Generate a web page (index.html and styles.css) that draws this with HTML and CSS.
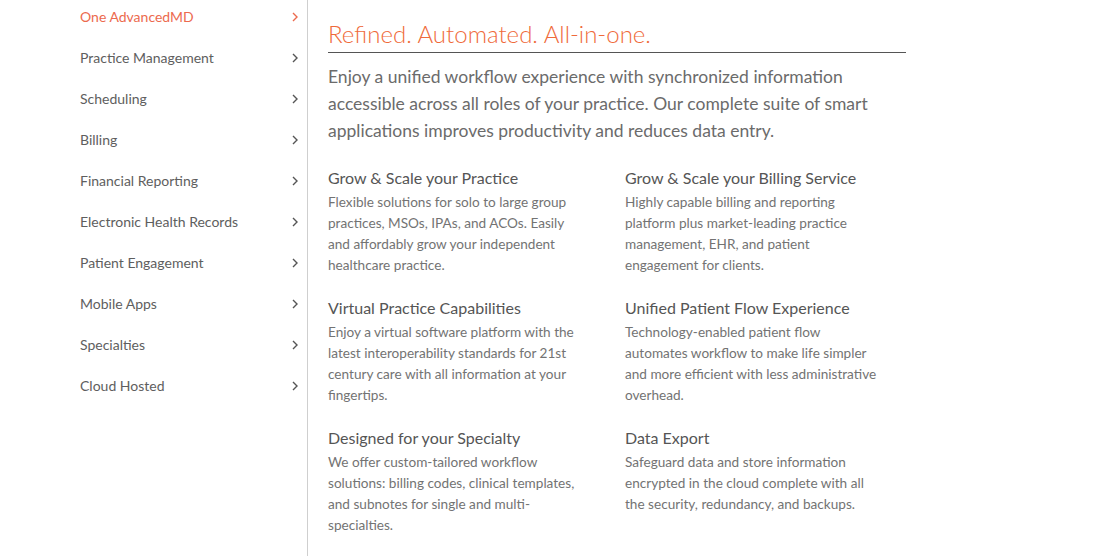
FILE: index.html
```html
<!DOCTYPE html>
<html>
<head>
<meta charset="utf-8">
<link rel="stylesheet" href="styles.css">
</head>
<body>
<div class="page">
  <nav class="sidebar">
    <ul class="menu">
      <li class="item active"><span>One AdvancedMD</span><svg class="chev" viewBox="0 0 6 10"><path d="M1 1l4 4-4 4"/></svg></li>
      <li class="item"><span>Practice Management</span><svg class="chev" viewBox="0 0 6 10"><path d="M1 1l4 4-4 4"/></svg></li>
      <li class="item"><span>Scheduling</span><svg class="chev" viewBox="0 0 6 10"><path d="M1 1l4 4-4 4"/></svg></li>
      <li class="item"><span>Billing</span><svg class="chev" viewBox="0 0 6 10"><path d="M1 1l4 4-4 4"/></svg></li>
      <li class="item"><span>Financial Reporting</span><svg class="chev" viewBox="0 0 6 10"><path d="M1 1l4 4-4 4"/></svg></li>
      <li class="item"><span>Electronic Health Records</span><svg class="chev" viewBox="0 0 6 10"><path d="M1 1l4 4-4 4"/></svg></li>
      <li class="item"><span>Patient Engagement</span><svg class="chev" viewBox="0 0 6 10"><path d="M1 1l4 4-4 4"/></svg></li>
      <li class="item"><span>Mobile Apps</span><svg class="chev" viewBox="0 0 6 10"><path d="M1 1l4 4-4 4"/></svg></li>
      <li class="item"><span>Specialties</span><svg class="chev" viewBox="0 0 6 10"><path d="M1 1l4 4-4 4"/></svg></li>
      <li class="item"><span>Cloud Hosted</span><svg class="chev" viewBox="0 0 6 10"><path d="M1 1l4 4-4 4"/></svg></li>
    </ul>
  </nav>
  <main class="content">
    <h1 class="title">Refined. Automated. All-in-one.</h1>
    <p class="lead">Enjoy a unified workflow experience with synchronized information accessible across all roles of your practice. Our complete suite of smart applications improves productivity and reduces data entry.</p>
    <div class="features">
      <div class="feature">
        <h3>Grow &amp; Scale your Practice</h3>
        <p>Flexible solutions for solo to large group practices, MSOs, IPAs, and ACOs. Easily and affordably grow your independent healthcare practice.</p>
      </div>
      <div class="feature">
        <h3>Grow &amp; Scale your Billing Service</h3>
        <p>Highly capable billing and reporting platform plus market-leading practice management, EHR, and patient engagement for clients.</p>
      </div>
      <div class="feature">
        <h3>Virtual Practice Capabilities</h3>
        <p>Enjoy a virtual software platform with the latest interoperability standards for 21st century care with all information at your fingertips.</p>
      </div>
      <div class="feature">
        <h3>Unified Patient Flow Experience</h3>
        <p>Technology-enabled patient flow automates workflow to make life simpler and more efficient with less administrative overhead.</p>
      </div>
      <div class="feature">
        <h3>Designed for your Specialty</h3>
        <p>We offer custom-tailored workflow solutions: billing codes, clinical templates, and subnotes for single and multi-specialties.</p>
      </div>
      <div class="feature">
        <h3>Data Export</h3>
        <p>Safeguard data and store information encrypted in the cloud complete with all the security, redundancy, and backups.</p>
      </div>
    </div>
  </main>
</div>
</body>
</html>
```

FILE: styles.css
```css
* { box-sizing: border-box; }
html, body { margin: 0; padding: 0; background: #fff; }
body {
  font-family: "Lato", "Liberation Sans", sans-serif;
  color: #6b6b6b;
  height: 556px;
  overflow: hidden;
}
.page {
  display: flex;
  height: 556px;
}
.sidebar {
  width: 308px;
  flex: none;
  border-right: 1px solid #cfcfcf;
}
.menu {
  list-style: none;
  margin: 0;
  padding: 0 0 0 80px;
}
.item {
  display: flex;
  align-items: center;
  justify-content: space-between;
  height: 41px;
  padding-right: 9px;
  font-size: 14px;
  color: #5e5e5e;
}
.menu .item:first-child { margin-top: -4px; }
.item.active { color: #ec6a4e; }
.chev {
  width: 6px;
  height: 10px;
  fill: none;
  stroke: #555;
  stroke-width: 1.4;
}
.item.active .chev { stroke: #ec6a4e; }
.content {
  padding: 20px 0 0 20px;
  width: 598px;
}
.title {
  margin: 0;
  font-weight: 300;
  font-size: 24px;
  line-height: 28px;
  color: #ef6a3a;
  padding-bottom: 4px;
  border-bottom: 1px solid #555;
}
.lead {
  margin: 10px 0 0;
  font-size: 17.5px;
  line-height: 27px;
  color: #6b6b6b;
}
.features {
  display: grid;
  grid-template-columns: 297px 281px;
  row-gap: 21px;
  margin-top: 23px;
}
.feature h3 {
  margin: 0;
  font-weight: 400;
  font-size: 16px;
  line-height: 22px;
  color: #555;
}
.feature p {
  margin: 3px 0 0;
  font-size: 13.6px;
  line-height: 21px;
  color: #737373;
  max-width: 260px;
}
```
